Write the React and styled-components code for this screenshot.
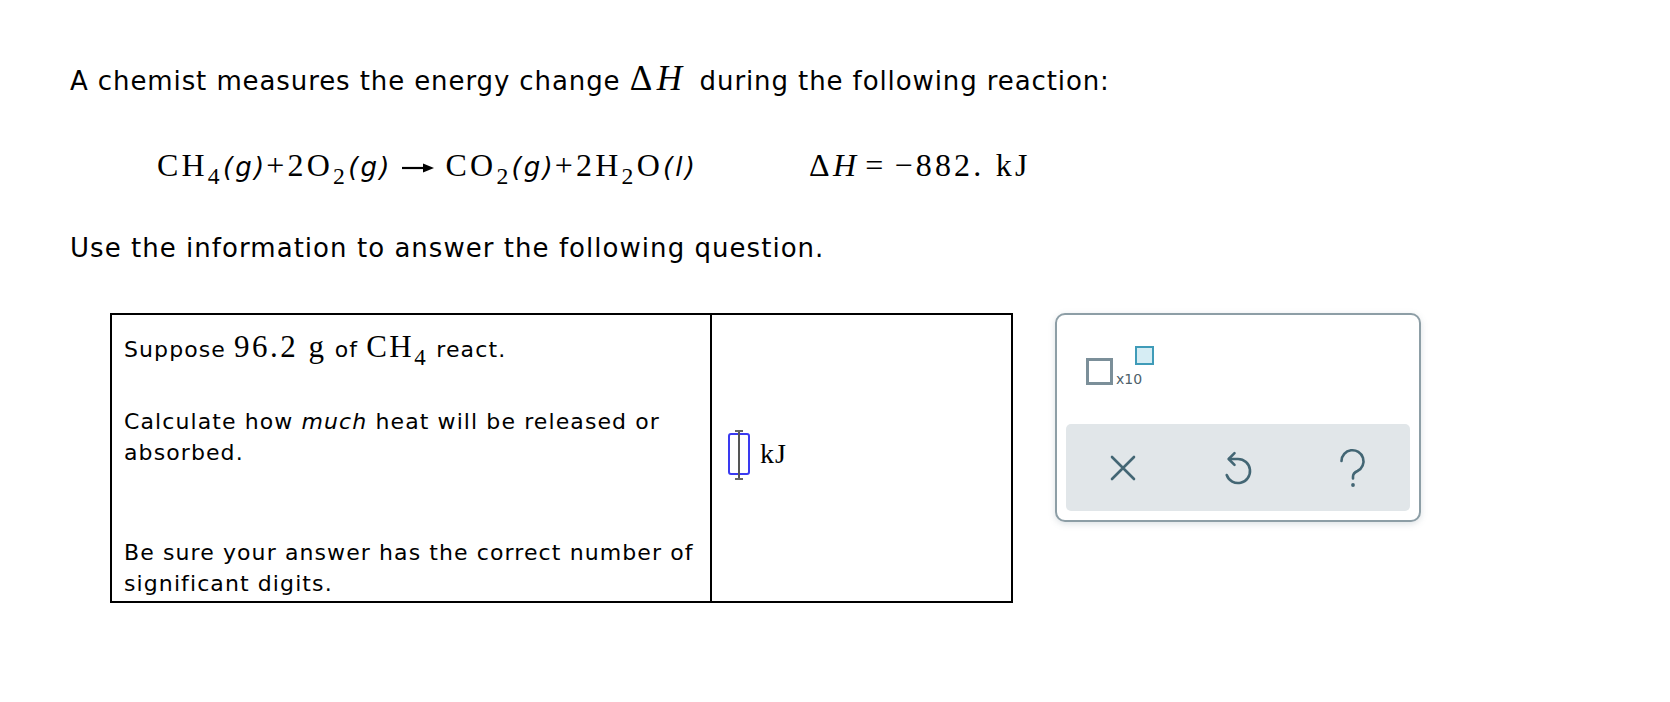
import React from "react";
import styled, { createGlobalStyle } from "styled-components";

const GlobalStyle = createGlobalStyle`
  html, body {
    margin: 0;
    padding: 0;
    background: #ffffff;
  }
  body {
    font-family: "DejaVu Sans", Verdana, sans-serif;
    color: #000;
  }
`;

const Page = styled.div`
  padding: 61px 0 0 70px;
`;

const Prompt = styled.p`
  margin: 0;
  font-size: 26px;
  line-height: 36px;
  letter-spacing: ${({ spacing }) => spacing ?? 0.95}px;
  white-space: nowrap;
`;

// serif math text (numbers, formulas, variables)
const Math = styled.span`
  font-family: "Liberation Serif", "Times New Roman", serif;
  font-size: ${({ size }) => size || 32}px;
  letter-spacing: ${({ spacing }) => spacing ?? 2}px;
`;

const DeltaH = styled(Math)`
  letter-spacing: 4.5px;
  margin-right: 4px;
  i {
    font-style: italic;
  }
`;

const Sub = styled.sub`
  font-size: 0.74em;
  vertical-align: -0.33em;
  line-height: 0;
`;

const State = styled.span`
  font-family: "DejaVu Sans", Verdana, sans-serif;
  font-style: italic;
  font-size: 26px;
  letter-spacing: 2.2px;
`;

const EquationRow = styled.div`
  display: flex;
  align-items: center;
  gap: 112px;
  margin: 41px 0 0 87px;
  height: 50px;
  font-family: "Liberation Serif", "Times New Roman", serif;
  font-size: 32px;
  letter-spacing: 3.2px;
  white-space: nowrap;
`;

const Rel = styled.span`
  margin: 0 8px 0 6px;
`;

const Arrow = styled.svg`
  width: 32px;
  height: 12px;
  margin: 0 12px 0 10px;
  vertical-align: middle;
`;

const Question = styled(Prompt)`
  margin-top: 40px;
`;

const Work = styled.div`
  display: flex;
  align-items: flex-start;
  gap: 42px;
  margin: 47px 0 0 40px;
`;

const Grid = styled.table`
  border-collapse: collapse;
  width: 903px;
  height: 290px;
  td {
    border: 2px solid #000;
    vertical-align: top;
    padding: 0;
  }
`;

const PromptCell = styled.td`
  width: 576px;
  font-size: 22px;
  line-height: 31px;
  letter-spacing: 1.1px;
  padding: 11px 10px 0 12px !important;
  white-space: nowrap;
`;

const CellLine = styled.p`
  margin: ${({ gap }) => gap || 0}px 0 0;
  line-height: ${({ tall }) => (tall ? "42px" : "31px")};
`;

const AnswerCell = styled.td`
  vertical-align: middle !important;
  padding: 0 0 8px 16px !important;
`;

const AnswerSlot = styled.div`
  display: flex;
  align-items: center;
  gap: 10px;
`;

const InputBox = styled.div`
  position: relative;
  width: 18px;
  height: 38px;
  border: 2px solid #3a3af0;
  border-radius: 3px;
`;

const Caret = styled.div`
  position: absolute;
  left: 8px;
  top: -5px;
  width: 2px;
  height: 50px;
  background: #555;
  &::before,
  &::after {
    content: "";
    position: absolute;
    left: -3px;
    width: 8px;
    height: 2px;
    background: #666;
  }
  &::before {
    top: 0;
  }
  &::after {
    bottom: 0;
  }
`;

const Unit = styled.span`
  font-family: "Liberation Serif", "Times New Roman", serif;
  font-size: 28px;
  letter-spacing: 1px;
`;

const Panel = styled.div`
  box-sizing: content-box;
  width: 344px;
  height: 196px;
  padding: 0 9px 9px;
  border: 2px solid #8d9ea6;
  border-radius: 10px;
  box-shadow: 0 2px 6px rgba(120, 140, 150, 0.25);
  background: #fff;
  display: flex;
  flex-direction: column;
  justify-content: space-between;
`;

const Sci = styled.div`
  display: flex;
  align-items: flex-start;
  padding: 31px 0 0 20px;
`;

const BaseBox = styled.div`
  width: 21px;
  height: 21px;
  margin-top: 12px;
  border: 3px solid #7b8f99;
`;

const Times = styled.span`
  font-size: 14px;
  line-height: 14px;
  color: #4e616a;
  margin: 26px 0 0 3px;
`;

const ExpBox = styled.div`
  width: 15px;
  height: 15px;
  margin-left: -7px;
  border: 2.5px solid #3f9bb8;
  background: #d6edf4;
`;

const Toolbar = styled.div`
  display: flex;
  height: 87px;
  background: #e1e6e9;
  border-radius: 5px;
`;

const ToolButton = styled.button`
  flex: 1;
  display: flex;
  align-items: center;
  justify-content: center;
  border: 0;
  background: transparent;
  padding: 0;
  color: #436674;
  svg {
    display: block;
  }
`;

const ArrowGlyph = () => (
  <Arrow viewBox="0 0 32 12">
    <line x1="0" y1="6" x2="24" y2="6" stroke="#000" strokeWidth="2.2" />
    <polygon points="21,1.5 32,6 21,10.5" fill="#000" />
  </Arrow>
);

const CloseIcon = () => (
  <svg width="26" height="26" viewBox="0 0 26 26">
    <path d="M2 2 L24 24 M24 2 L2 24" stroke="currentColor" strokeWidth="2.6" strokeLinecap="round" fill="none" />
  </svg>
);

const UndoIcon = () => (
  <svg width="32" height="36" viewBox="0 0 32 36">
    <path
      d="M7 9 H16 A12 12 0 1 1 4.7 25"
      stroke="currentColor"
      strokeWidth="2.6"
      strokeLinecap="round"
      fill="none"
    />
    <path d="M12.5 3.2 L6.7 9 L12.5 14.8" stroke="currentColor" strokeWidth="2.6" strokeLinecap="round" strokeLinejoin="round" fill="none" />
  </svg>
);

const HelpIcon = () => (
  <svg width="28" height="40" viewBox="0 0 28 40">
    <path
      d="M2.5 13 A11 11 0 1 1 18.5 23 Q14 25 14 28.5 V30.5"
      stroke="currentColor"
      strokeWidth="2.6"
      strokeLinecap="round"
      fill="none"
    />
    <circle cx="14" cy="37" r="1.9" fill="currentColor" />
  </svg>
);

export default function App() {
  return (
    <>
      <GlobalStyle />
      <Page>
        <Prompt spacing={0.9}>
          A chemist measures the energy change{" "}
          <DeltaH size={35}>
            Δ<i>H</i>
          </DeltaH>{" "}
          during the following reaction:
        </Prompt>

        <EquationRow>
          <span>
            CH<Sub>4</Sub>
            <State>(g)</State>+2O<Sub>2</Sub>
            <State>(g)</State>
            <ArrowGlyph />
            CO<Sub>2</Sub>
            <State>(g)</State>+2H<Sub>2</Sub>O<State>(l)</State>
          </span>
          <span>
            Δ<i>H</i>
            <Rel>=</Rel>−882. kJ
          </span>
        </EquationRow>

        <Question spacing={1.04}>Use the information to answer the following question.</Question>

        <Work>
          <Grid>
            <tbody>
              <tr>
                <PromptCell>
                  <CellLine tall>
                    Suppose{" "}
                    <Math size={31} spacing={2.5}>
                      96.2 g
                    </Math>{" "}
                    of{" "}
                    <Math size={31} spacing={2.5}>
                      CH<Sub>4</Sub>
                    </Math>{" "}
                    react.
                  </CellLine>
                  <CellLine gap={35}>
                    Calculate how <i>much</i> heat will be released or
                    <br />
                    absorbed.
                  </CellLine>
                  <CellLine gap={69}>
                    Be sure your answer has the correct number of
                    <br />
                    significant digits.
                  </CellLine>
                </PromptCell>
                <AnswerCell>
                  <AnswerSlot>
                    <InputBox>
                      <Caret />
                    </InputBox>
                    <Unit>kJ</Unit>
                  </AnswerSlot>
                </AnswerCell>
              </tr>
            </tbody>
          </Grid>

          <Panel>
            <Sci>
              <BaseBox />
              <Times>x10</Times>
              <ExpBox />
            </Sci>
            <Toolbar>
              <ToolButton aria-label="Clear">
                <CloseIcon />
              </ToolButton>
              <ToolButton aria-label="Undo">
                <UndoIcon />
              </ToolButton>
              <ToolButton aria-label="Help">
                <HelpIcon />
              </ToolButton>
            </Toolbar>
          </Panel>
        </Work>
      </Page>
    </>
  );
}
